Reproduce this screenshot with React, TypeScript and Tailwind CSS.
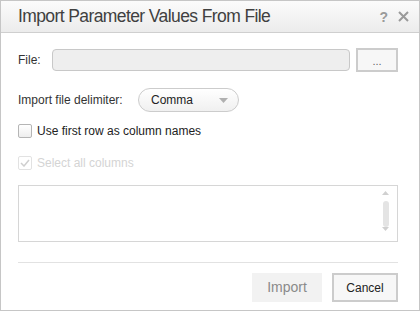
import React from "react";

export default function App() {
  return (
    <div
      className="w-[420px] h-[311px] bg-white border border-[#c6c6c6] flex flex-col text-[#333]"
      style={{ fontFamily: '"Liberation Sans", Arial, sans-serif' }}
    >
      <div className="h-[32px] shrink-0 flex items-center pl-[17px] pr-[10px] border-b border-[#cfcfcf] bg-gradient-to-b from-[#fbfbfb] to-[#ececec]">
        <div className="text-[17.5px] tracking-[-0.6px] text-[#404040] flex-1 leading-none pt-[1px]">Import Parameter Values From File</div>
        <div className="flex items-center gap-[10px] text-[#9a9a9a]">
          <span className="text-[14px] font-bold leading-none">?</span>
          <svg width="11" height="11" viewBox="0 0 11 11">
            <path d="M1 1 L10 10 M10 1 L1 10" stroke="#9a9a9a" strokeWidth="2" />
          </svg>
        </div>
      </div>
      <div className="flex-1 flex flex-col px-[17px] pt-[15px] text-[12px]">
        <div className="flex items-center h-[24px]">
          <span className="w-[34px]">File:</span>
          <div className="w-[298px] h-[22px] rounded-[4px] border border-[#c8c8c8] bg-[#eeeeee]" />
          <div className="ml-[6px] w-[42px] h-[24px] border-2 border-[#cccccc] bg-[#f7f7f7] flex items-center justify-center text-[#666] text-[11px] leading-none pt-[3px]">
            ...
          </div>
        </div>
        <div className="flex items-center h-[24px] mt-[16px]">
          <span className="w-[120px]">Import file delimiter:</span>
          <div className="w-[101px] h-[24px] rounded-full border border-[#cccccc] bg-gradient-to-b from-white to-[#f0f0f0] flex items-center pl-[12px] pr-[10px]">
            <span className="flex-1 text-[#222]">Comma</span>
            <svg width="9" height="5" viewBox="0 0 9 5">
              <path d="M0 0 L9 0 L4.5 5 Z" fill="#b0b0b0" />
            </svg>
          </div>
        </div>
        <div className="flex items-center mt-[12px] h-[14px]">
          <div className="w-[14px] h-[14px] rounded-[2px] border border-[#b5b5b5] bg-gradient-to-b from-white to-[#eeeeee]" />
          <span className="ml-[5px] text-[#222]">Use first row as column names</span>
        </div>
        <div className="flex items-center mt-[18px] h-[14px]">
          <div className="w-[14px] h-[14px] rounded-[2px] border border-[#e2e2e2] bg-white flex items-center justify-center">
            <svg width="10" height="8" viewBox="0 0 10 8">
              <path d="M1 4 L4 7 L9 1" stroke="#cfcfcf" strokeWidth="1.5" fill="none" />
            </svg>
          </div>
          <span className="ml-[5px] text-[#d4d4d4]">Select all columns</span>
        </div>
        <div className="mt-[15px] h-[57px] w-[380px] border border-[#d6d6d6] relative">
          <div className="absolute right-[8px] top-[5px] flex flex-col items-center">
            <svg width="7" height="4" viewBox="0 0 7 4">
              <path d="M0 4 L3.5 0 L7 4 Z" fill="#d0d0d0" />
            </svg>
            <div className="mt-[6px] w-[6px] h-[26px] rounded-[3px] bg-[#e4e4e4]" />
            <svg width="7" height="4" viewBox="0 0 7 4">
              <path d="M0 0 L7 0 L3.5 4 Z" fill="#d0d0d0" />
            </svg>
          </div>
        </div>
        <div className="mt-[20px] border-t border-[#e2e2e2] w-[380px]" />
        <div className="flex justify-end gap-[10px] mt-[10px] w-[380px]">
          <div className="w-[70px] h-[29px] bg-[#f2f2f2] flex items-center justify-center text-[14px] text-[#8a8a8a]">
            Import
          </div>
          <div className="w-[66px] h-[29px] border-2 border-[#cccccc] bg-[#f7f7f7] flex items-center justify-center text-[12px] text-[#222]">
            Cancel
          </div>
        </div>
      </div>
    </div>
  );
}
